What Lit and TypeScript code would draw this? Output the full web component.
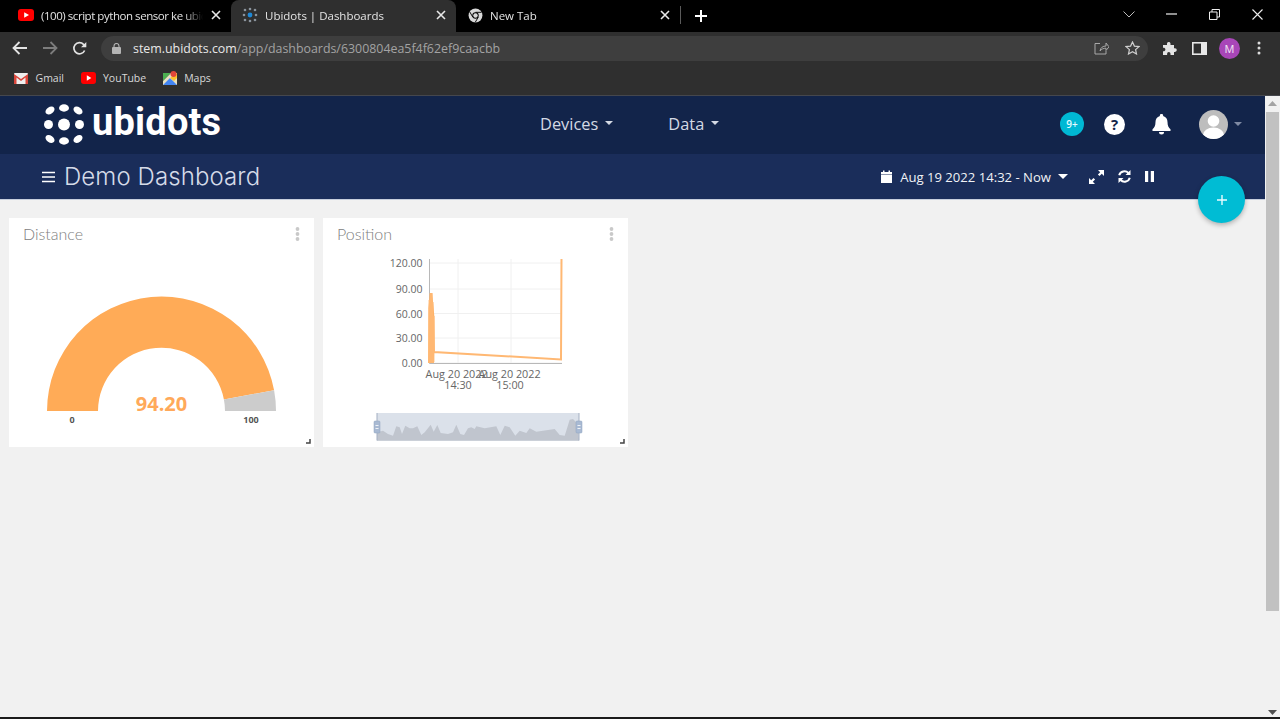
import { LitElement, html, css, svg } from 'lit';
import { customElement } from 'lit/decorators.js';

// sparkline of the range selector, in zoomed-up coordinates
const RANGE_POINTS = [
  [0, 58], [18, 53], [33, 63], [48, 68], [58, 40], [68, 43], [75, 63], [85, 38], [98, 46], [108, 46],
  [121, 40], [133, 66], [143, 58], [161, 35], [170, 56], [181, 36], [191, 60], [213, 63], [228, 58],
  [238, 35], [250, 63], [261, 66], [273, 46], [283, 43], [293, 48], [298, 40], [323, 46], [358, 40],
  [370, 66], [383, 38], [398, 43], [415, 68], [428, 53], [448, 60], [458, 46], [478, 56], [498, 53],
  [533, 48], [548, 66], [563, 68], [578, 20], [588, 18], [603, 33], [606, 83], [0, 83],
];

// bursty samples at the left edge of the position chart
const BURST = [
  [429, 363], [429.6, 300], [430, 362], [430.6, 293], [431, 363], [431.6, 293], [432, 362], [432.5, 302],
  [433, 363], [433.5, 316], [434, 352], [561, 359.5], [561.5, 259],
];

const close = svg`<path d="M1 1l8 8M9 1l-8 8" stroke="#e8e8e8" stroke-width="1.6" fill="none"/>`;

const youtube = (w: number) =>
  html`<svg width="${w}" height="12" viewBox="0 0 16 12" preserveAspectRatio="none"><rect width="16" height="12" rx="3" fill="#f00"/><path d="M6.2 3.2L11 6 6.2 8.8z" fill="#fff"/></svg>`;

@customElement('app-root')
export class AppRoot extends LitElement {
  static styles = css`
    :host {
      display: flex;
      flex-direction: column;
      width: 1280px;
      height: 719px;
      overflow: hidden;
      font-family: 'Open Sans', 'Liberation Sans', sans-serif;
      background: #f1f1f1;
    }
    svg {
      display: block;
      flex: none;
    }

    /* browser chrome */
    .tabstrip {
      display: flex;
      align-items: flex-end;
      height: 32px;
      background: #000;
      padding-left: 7px;
    }
    .tab {
      display: flex;
      align-items: center;
      width: 224px;
      height: 32px;
      padding: 0 9px 2px 11px;
      box-sizing: border-box;
      font-size: 11.5px;
      color: #e3e3e3;
      flex: none;
    }
    .tab.active {
      background: #2f2f2f;
      border-radius: 8px 8px 0 0;
      width: 225px;
    }
    .tab.tight .label {
      letter-spacing: -0.45px;
    }
    .tab .fav {
      width: 16px;
      margin-right: 7px;
      display: flex;
      justify-content: center;
    }
    .tab .label {
      flex: 1;
      white-space: nowrap;
      overflow: hidden;
      -webkit-mask-image: linear-gradient(to right, #000 88%, transparent);
      mask-image: linear-gradient(to right, #000 88%, transparent);
    }
    .tab .x {
      margin: 0 1px 0 8px;
    }
    .divider {
      width: 1px;
      height: 18px;
      background: #5a5a5a;
      margin: 0 0 8px 0;
    }
    .newtab {
      margin: 0 0 10px 14px;
    }
    .winctl {
      margin-left: auto;
      display: flex;
      align-items: center;
      align-self: stretch;
      padding: 0 1px 4px 0;
    }
    .winctl span {
      width: 43px;
      display: flex;
      justify-content: center;
    }
    .toolbar {
      display: flex;
      align-items: center;
      height: 32px;
      background: #2f2f2f;
      padding-left: 12px;
    }
    .navbtn {
      width: 30px;
      flex: none;
    }
    .omnibox {
      display: flex;
      align-items: center;
      width: 1047px;
      height: 25px;
      margin-left: -1px;
      border-radius: 13px;
      background: #3e3e3e;
      padding: 0 8px 0 11px;
      box-sizing: border-box;
      flex: none;
      font-size: 12.4px;
      color: #a3a3a3;
    }
    .omnibox .url {
      margin-left: 12px;
      flex: 1;
    }
    .omnibox b {
      font-weight: 400;
      color: #e8e8e8;
    }
    .omni-icons {
      display: flex;
      gap: 16px;
      align-items: center;
    }
    .tools {
      display: flex;
      align-items: center;
      margin-left: 14px;
    }
    .tool-ext {
      margin-right: 15px;
    }
    .profile {
      width: 21px;
      height: 21px;
      border-radius: 50%;
      background: #a846b8;
      color: #f2e6f5;
      font-size: 11px;
      display: flex;
      align-items: center;
      justify-content: center;
      margin: 0 17px 0 12px;
    }
    .bookmarks {
      display: flex;
      align-items: center;
      height: 28px;
      background: #2f2f2f;
      padding: 0 0 3px 14px;
      font-size: 10.5px;
      color: #d8d8d8;
      border-bottom: 1px solid #45474d;
      box-sizing: content-box;
      gap: 16.5px;
    }
    .bookmark {
      display: flex;
      align-items: center;
      gap: 7.5px;
    }

    /* page */
    .page {
      flex: 1;
      display: flex;
      min-height: 0;
      border-bottom: 2px solid #1b1b1b;
    }
    .main {
      flex: 1;
      position: relative;
      display: flex;
      flex-direction: column;
      min-width: 0;
    }
    .nav {
      display: flex;
      align-items: center;
      height: 56px;
      padding: 0 0 2px 43px;
      background: #12244a;
      color: #fff;
      flex: none;
    }
    .logo {
      display: flex;
      align-items: center;
      gap: 6px;
      width: 497px;
      margin-top: 1px;
    }
    .logo svg {
      margin-top: 1px;
    }
    .logo span {
      font-family: Roboto, 'Open Sans', sans-serif;
      font-weight: 700;
      font-size: 38px;
      line-height: 42px;
      letter-spacing: 0.2px;
      margin-top: -5px;
    }
    .menu {
      display: flex;
      align-items: center;
      gap: 6px;
      font-size: 16.4px;
      color: #d4d9e4;
      margin: -2px 55px 0 0;
    }
    .caret {
      width: 0;
      height: 0;
      border-left: 4px solid transparent;
      border-right: 4px solid transparent;
      border-top: 4px solid currentColor;
      margin-left: 1px;
    }
    .nav-right {
      margin-left: auto;
      display: flex;
      align-items: center;
      padding-right: 23px;
    }
    .badge {
      width: 24px;
      height: 24px;
      border-radius: 50%;
      background: #00b8d4;
      color: #e6fbff;
      font-size: 10px;
      font-weight: 600;
      display: flex;
      align-items: center;
      justify-content: center;
      margin-right: 20px;
    }
    .help {
      width: 21px;
      height: 21px;
      border-radius: 50%;
      background: #fff;
      color: #12244a;
      font-size: 15px;
      font-weight: 700;
      display: flex;
      align-items: center;
      justify-content: center;
      margin-right: 27px;
    }
    .bell {
      margin-right: 28px;
    }
    .user {
      margin-right: 5px;
    }
    .user-caret {
      color: #7f8aa3;
    }
    .subnav {
      display: flex;
      align-items: center;
      height: 45px;
      background: #1a2d5a;
      padding-left: 42px;
      color: #fff;
      flex: none;
      border-bottom: 1px solid #c7cedd;
      box-sizing: content-box;
    }
    .title {
      font-family: Inter, 'Open Sans', sans-serif;
      font-weight: 300;
      font-size: 24px;
      color: #d5dbe8;
      margin-left: 9px;
      letter-spacing: 0.1px;
    }
    .sub-right {
      margin-left: auto;
      display: flex;
      align-items: center;
      padding-right: 111px;
    }
    .range {
      font-size: 13.1px;
      margin: 0 7px 0 8px;
      color: #f0f2f6;
    }
    .sub-right .caret {
      border-left-width: 5px;
      border-right-width: 5px;
      border-top-width: 5px;
      color: #fff;
      margin: 0 21px 0 0;
    }
    .icon-expand,
    .icon-refresh {
      margin-right: 14px;
    }
    .fab {
      position: absolute;
      left: 1198px;
      top: 80px;
      width: 47px;
      height: 47px;
      border-radius: 50%;
      background: #00bcd4;
      box-shadow: 0 2px 5px rgba(0, 0, 0, 0.28);
      display: flex;
      align-items: center;
      justify-content: center;
    }
    .cards {
      display: flex;
      gap: 9px;
      padding: 18px 9px;
    }
    .card {
      position: relative;
      width: 305px;
      height: 229px;
      background: #fff;
      flex: none;
    }
    .card-head {
      display: flex;
      align-items: center;
      justify-content: space-between;
      padding: 6px 14px 0;
      height: 20px;
    }
    .card-title {
      font-family: Lato, 'Open Sans', sans-serif;
      font-weight: 300;
      font-size: 16px;
      color: #808080;
      margin-top: -2px;
    }
    .resize {
      position: absolute;
      right: 3px;
      bottom: 3px;
    }
    .gauge-body,
    .chart-body {
      display: block;
    }
    .gauge-body text,
    .chart-body text {
      font-family: 'Open Sans', 'Liberation Sans', sans-serif;
    }
    .scrollbar {
      width: 15px;
      background: #f1f1f1;
      display: flex;
      flex-direction: column;
      align-items: center;
      flex: none;
    }
    .thumb {
      width: 13px;
      height: 499px;
      margin: 6px 0;
      background: #c1c1c1;
    }
    .arrow-box {
      margin-top: 5px;
    }
    .arrow-bottom {
      margin-top: 93px;
    }
  `;

  renderTab(fav: unknown, label: string, cls = '') {
    return html`
      <div class="tab ${cls}">
        <span class="fav">${fav}</span>
        <span class="label">${label}</span>
        <svg class="x" width="10" height="10" viewBox="0 0 10 10">${close}</svg>
      </div>
    `;
  }

  renderBrowser() {
    const ubidotsFav = html`<svg width="16" height="16" viewBox="0 0 16 16">
      <circle cx="8" cy="8" r="2.4" fill="#1e88d6"/>
      <g fill="#8a939c">
        <circle cx="3" cy="3" r="1.3"/><circle cx="8" cy="2" r="1.3"/><circle cx="13" cy="3" r="1.3"/>
        <circle cx="2" cy="8" r="1.3"/><circle cx="14" cy="8" r="1.3"/>
        <circle cx="3" cy="13" r="1.3"/><circle cx="8" cy="14" r="1.3"/><circle cx="13" cy="13" r="1.3"/>
      </g>
    </svg>`;
    const chromeFav = html`<svg width="15" height="15" viewBox="0 0 16 16">
      <circle cx="8" cy="8" r="7.4" fill="#d8d8d8"/>
      <circle cx="8" cy="8" r="3.4" fill="#000"/>
      <circle cx="8" cy="8" r="2.4" fill="#d8d8d8"/>
      <path d="M8 4.6h6.4M5.1 9.7L1.9 4.2M10.9 9.7l-3.2 5.6" stroke="#000" stroke-width="1"/>
    </svg>`;
    return html`
      <div class="tabstrip">
        ${this.renderTab(youtube(16), '(100) script python sensor ke ubidots', 'tight')}
        ${this.renderTab(ubidotsFav, 'Ubidots | Dashboards', 'active')}
        ${this.renderTab(chromeFav, 'New Tab')}
        <div class="divider"></div>
        <svg class="newtab" width="12" height="12" viewBox="0 0 12 12"><path d="M6 0v12M0 6h12" stroke="#fff" stroke-width="2"/></svg>
        <div class="winctl">
          <span><svg width="12" height="7" viewBox="0 0 12 7"><path d="M.5.5L6 6l5.5-5.5" stroke="#bbb" fill="none"/></svg></span>
          <span><svg width="11" height="2" viewBox="0 0 11 2"><path d="M0 1h11" stroke="#eee" stroke-width="1.2"/></svg></span>
          <span><svg width="11" height="11" viewBox="0 0 11 11"><path d="M.5 3h7.500v7.500H.5zM3 3V.5h7.500V8H8" stroke="#eee" fill="none"/></svg></span>
          <span><svg width="11" height="11" viewBox="0 0 11 11"><path d="M.5.5l10 10M10.500.5l-10 10" stroke="#eee" stroke-width="1.1"/></svg></span>
        </div>
      </div>
      <div class="toolbar">
        <div class="navbtn"><svg width="16" height="14" viewBox="0 0 16 14"><path d="M15 7H2M7.500 1L1.500 7l6 6" stroke="#e3e3e3" stroke-width="1.800" fill="none"/></svg></div>
        <div class="navbtn"><svg width="16" height="14" viewBox="0 0 16 14"><path d="M1 7h13M8.500 1l6 6-6 6" stroke="#7d7d7d" stroke-width="1.800" fill="none"/></svg></div>
        <div class="navbtn"><svg width="15" height="15" viewBox="0 0 15 15"><path d="M12.600 9.500A5.600 5.600 0 1 1 11.500 3.300L13.300 5" stroke="#e3e3e3" stroke-width="1.700" fill="none"/><path d="M14.300 1v5.300H9z" fill="#e3e3e3"/></svg></div>
        <div class="omnibox">
          <svg width="9" height="11" viewBox="0 0 9 11"><path d="M2 4.500V3a2.500 2.500 0 0 1 5 0v1.500" stroke="#b5b5b5" stroke-width="1.100" fill="none"/><rect y="4" width="9" height="7" rx="1" fill="#b5b5b5"/></svg>
          <span class="url"><b>stem.ubidots.com</b>/app/dashboards/6300804ea5f4f62ef9caacbb</span>
          <div class="omni-icons">
            <svg width="15" height="14" viewBox="0 0 15 14"><path d="M6 2.500H1v10.500h11V10M6 10c.5-3.500 3-5 6-5V2l3 3.800L12 9.500V7.200c-2.500 0-4.500.8-6 2.800z" stroke="#a8a8a8" fill="none"/></svg>
            <svg width="15" height="14" viewBox="0 0 15 14"><path d="M7.500 1l1.900 4.100 4.500.5-3.300 3 .9 4.400-4-2.300-4 2.300.9-4.400-3.300-3 4.500-.5z" stroke="#cfcfcf" stroke-width="1.200" fill="none"/></svg>
          </div>
        </div>
        <div class="tools">
          <svg class="tool-ext" width="15" height="15" viewBox="0 0 15 15"><path d="M5 2.500a1.800 1.800 0 0 1 3.500 0V4h3.500v3.300h1a1.800 1.800 0 0 1 0 3.600h-1V14H8.500v-1.200a1.700 1.700 0 0 0-3.400 0V14H1v-3.800h1.200a1.800 1.800 0 0 0 0-3.400H1V4h4z" fill="#e3e3e3"/></svg>
          <svg width="15" height="13" viewBox="0 0 15 13"><rect x=".8" y=".8" width="13.400" height="11.400" fill="none" stroke="#e8e8e8" stroke-width="1.600"/><rect x="9" y="1" width="5" height="11" fill="#e8e8e8"/></svg>
          <div class="profile">M</div>
          <svg width="4" height="14" viewBox="0 0 4 14"><g fill="#ddd"><circle cx="2" cy="2" r="1.500"/><circle cx="2" cy="7" r="1.500"/><circle cx="2" cy="12" r="1.500"/></g></svg>
        </div>
      </div>
      <div class="bookmarks">
        <div class="bookmark">
          <svg width="14" height="11" viewBox="0 0 14 11"><rect width="14" height="11" rx="1" fill="#eee"/><path d="M0 1l7 5 7-5v10h-2.500V4.500L7 8 2.500 4.500V11H0z" fill="#d9463b"/></svg>
          Gmail
        </div>
        <div class="bookmark">${youtube(15)} YouTube</div>
        <div class="bookmark">
          <svg width="14" height="14" viewBox="0 0 14 14"><path d="M0 2h8L0 10z" fill="#4caf50"/><path d="M0 10L8 2h6v12H0z" fill="#e8e0c0"/><path d="M0 14l7-7 7 7z" fill="#4285f4"/><path d="M7 7l7-5v5l-3 3z" fill="#fbc02d"/><circle cx="10.500" cy="3" r="3" fill="#e0463a"/></svg>
          Maps
        </div>
      </div>
    `;
  }

  renderLogo() {
    return html`<svg width="43" height="42" viewBox="0 0 43 42" fill="#fff">
      <ellipse cx="7" cy="6.500" rx="5" ry="3.400" transform="rotate(-35 7 6.500)"/>
      <ellipse cx="21" cy="4" rx="5" ry="3.700"/>
      <ellipse cx="35" cy="6.500" rx="5" ry="3.400" transform="rotate(35 35 6.500)"/>
      <circle cx="5.500" cy="20.500" r="4.500"/>
      <circle cx="21" cy="20.500" r="6"/>
      <circle cx="36.500" cy="20.500" r="4.500"/>
      <ellipse cx="7" cy="35" rx="5" ry="3.400" transform="rotate(35 7 35)"/>
      <ellipse cx="21" cy="37" rx="5" ry="3.700"/>
      <ellipse cx="35" cy="35" rx="5" ry="3.400" transform="rotate(-35 35 35)"/>
    </svg>`;
  }

  renderHeader() {
    return html`
      <div class="nav">
        <div class="logo">${this.renderLogo()}<span>ubidots</span></div>
        <div class="menu">Devices <i class="caret"></i></div>
        <div class="menu">Data <i class="caret"></i></div>
        <div class="nav-right">
          <div class="badge">9+</div>
          <div class="help">?</div>
          <svg class="bell" width="19" height="21" viewBox="0 0 19 21"><path d="M9.500 0a1.600 1.600 0 0 1 1.600 1.900c3 .8 4.400 3.200 4.400 6.100 0 4 1.200 5.600 3 7.300v1.700H.5v-1.700c1.800-1.700 3-3.300 3-7.300 0-2.900 1.400-5.300 4.400-6.100A1.600 1.600 0 0 1 9.500 0z" fill="#fff"/><path d="M7 18h5a2.500 2.500 0 0 1-5 0z" fill="#fff"/></svg>
          <svg class="user" width="29" height="29" viewBox="0 0 29 29"><circle cx="14.500" cy="14.500" r="14.500" fill="#bdbdbd"/><clipPath id="u"><circle cx="14.500" cy="14.500" r="14.500"/></clipPath><g clip-path="url(#u)" fill="#fff"><circle cx="14.500" cy="11" r="5.800"/><ellipse cx="14.500" cy="25" rx="10.500" ry="7.500"/></g></svg>
          <i class="caret user-caret"></i>
        </div>
      </div>
      <div class="subnav">
        <svg width="13" height="12" viewBox="0 0 13 12"><path d="M0 1.500h13M0 6h13M0 10.500h13" stroke="#fff" stroke-width="1.600"/></svg>
        <span class="title">Demo Dashboard</span>
        <div class="sub-right">
          <svg width="11" height="13" viewBox="0 0 11 13"><path d="M0 2h11v2.500H0z" fill="#fff"/><path d="M2 .5h1.500v2H2zM7.500.5H9v2H7.500zM0 5h11v8H0z" fill="#fff"/></svg>
          <span class="range">Aug 19 2022 14:32 - Now</span>
          <i class="caret"></i>
          <svg class="icon-expand" width="15" height="14" viewBox="0 0 15 14"><path d="M9 0h6v6l-2.200-2.200-2.300 2.300-1.600-1.600 2.300-2.300zM6 14H0V8l2.200 2.200 2.300-2.300 1.600 1.600-2.300 2.300z" fill="#fff"/></svg>
          <svg class="icon-refresh" width="13" height="13" viewBox="0 0 13 13"><path d="M1.200 5.300A5.500 5.500 0 0 1 10.400 3M11.800 7.700A5.500 5.500 0 0 1 2.600 10" stroke="#fff" stroke-width="2" fill="none"/><path d="M12.500 0v5H7.500zM.5 13V8h5z" fill="#fff"/></svg>
          <svg width="9" height="11" viewBox="0 0 9 11"><path d="M0 0h3.200v11H0zM5.800 0H9v11H5.800z" fill="#fff"/></svg>
        </div>
      </div>
    `;
  }

  renderDots() {
    return html`<svg width="5" height="14" viewBox="0 0 5 14"><g fill="#c9c9c9"><circle cx="2.500" cy="2" r="1.900"/><circle cx="2.500" cy="7" r="1.900"/><circle cx="2.500" cy="12" r="1.900"/></g></svg>`;
  }

  renderResize() {
    return html`<svg class="resize" width="5" height="5" viewBox="0 0 5 5"><path d="M4 0v4H0" stroke="#444" stroke-width="1.500" fill="none"/></svg>`;
  }

  // svg coordinates are relative to the card body, which starts 26px below the card top
  renderGauge() {
    const cx = 152.5;
    const cy = 167;
    return html`<svg class="gauge-body" width="305" height="203" viewBox="0 0 305 203">
      <path d="M${cx - 114.5} ${cy}A114.500 114.500 0 0 1 ${cx + 112.6} ${cy - 20.7}L${cx + 62.4} ${cy - 11.5}A63.500 63.500 0 0 0 ${cx - 63.500} ${cy}z" fill="#ffab57"/>
      <path d="M${cx + 112.6} ${cy - 20.7}A114.500 114.500 0 0 1 ${cx + 114.5} ${cy}H${cx + 63.5}A63.500 63.500 0 0 0 ${cx + 62.4} ${cy - 11.5}z" fill="#cccccc"/>
      <text x="${cx}" y="${cy}" text-anchor="middle" font-size="20" font-weight="700" fill="#ffa95a">94.20</text>
      <text x="63" y="179" text-anchor="middle" font-size="9" font-weight="700" fill="#555">0</text>
      <text x="242" y="179" text-anchor="middle" font-size="9" font-weight="700" fill="#555">100</text>
    </svg>`;
  }

  renderChart() {
    // the card body starts at x=323, y=244 of the page
    const ox = 323;
    const oy = 244;
    const ticks = [
      ['120.00', 263],
      ['90.00', 289],
      ['60.00', 313.5],
      ['30.00', 338],
      ['0.00', 363],
    ] as const;
    const line = BURST.map(([x, y]) => `${x - ox},${y - oy}`).join(' ');
    const spark = RANGE_POINTS.map(([x, y]) => `${(x / 3).toFixed(1)},${(y / 3).toFixed(1)}`).join(' ');
    return html`<svg class="chart-body" width="305" height="203" viewBox="0 0 305 203">
      ${ticks.map(
        ([label, y]) => svg`
          <path d="M${429 - ox} ${y - oy}H${562 - ox}" stroke="#f0f0f0"/>
          <text x="${422.500 - ox}" y="${y - oy + 4}" text-anchor="end" font-size="10.500" fill="#666">${label}</text>
        `
      )}
      <path d="M${458 - ox} ${259 - oy}V${363 - oy}M${511 - ox} ${259 - oy}V${363 - oy}" stroke="#f0f0f0"/>
      <path d="M${429.500 - ox} ${259 - oy}V${363.500 - oy}H${562 - ox}" stroke="#b8b8b8" fill="none"/>
      <polygon points="${428.500 - ox},${358 - oy} ${428.500 - ox},${308 - oy} ${430 - ox},${293 - oy} ${432 - ox},${293 - oy} ${433 - ox},${302 - oy} ${434.300 - ox},${316 - oy} ${434.300 - ox},${362 - oy} ${431 - ox},${363 - oy}" fill="#ffab57"/>
      <polyline points="${line}" fill="none" stroke="#ffb873" stroke-width="2"/>
      <text font-size="10.800" fill="#666" text-anchor="middle">
        <tspan x="${458 - ox}" y="${378 - oy}">Aug 20 2022</tspan>
        <tspan x="${458 - ox}" y="${389 - oy}">14:30</tspan>
      </text>
      <text font-size="10.800" fill="#666" text-anchor="middle">
        <tspan x="${511 - ox}" y="${378 - oy}">Aug 20 2022</tspan>
        <tspan x="${510 - ox}" y="${389 - oy}">15:00</tspan>
      </text>
      <g transform="translate(${377 - ox} ${413 - oy})">
        <rect width="202" height="27.500" fill="#dbe1ea"/>
        <polygon points="${spark}" fill="#c0c5ce"/>
        <path d="M0 0V27.500M202 0V27.500" stroke="#a3afc2"/>
        <g fill="#a9bad3" stroke="#8fa3bf" stroke-width=".5">
          <rect x="-3" y="8" width="6" height="12" rx="1"/>
          <rect x="199" y="8" width="6" height="12" rx="1"/>
        </g>
        <path d="M-1.500 12.500h3M-1.500 15.500h3M200.500 12.500h3M200.500 15.500h3" stroke="#eef2f7"/>
      </g>
    </svg>`;
  }

  render() {
    return html`
      ${this.renderBrowser()}
      <div class="page">
        <div class="main">
          ${this.renderHeader()}
          <div class="cards">
            <div class="card">
              <div class="card-head"><span class="card-title">Distance</span>${this.renderDots()}</div>
              ${this.renderGauge()}
              ${this.renderResize()}
            </div>
            <div class="card">
              <div class="card-head"><span class="card-title">Position</span>${this.renderDots()}</div>
              ${this.renderChart()}
              ${this.renderResize()}
            </div>
          </div>
          <div class="fab">
            <svg width="10" height="10" viewBox="0 0 10 10"><path d="M5 0v10M0 5h10" stroke="#eafcff" stroke-width="1.400"/></svg>
          </div>
        </div>
        <div class="scrollbar">
          <svg class="arrow-box" width="9" height="5" viewBox="0 0 9 5"><path d="M4.500 0L9 5H0z" fill="#a3a3a3"/></svg>
          <div class="thumb"></div>
          <svg class="arrow-bottom" width="9" height="5" viewBox="0 0 9 5"><path d="M0 0h9L4.500 5z" fill="#505050"/></svg>
        </div>
      </div>
    `;
  }
}
